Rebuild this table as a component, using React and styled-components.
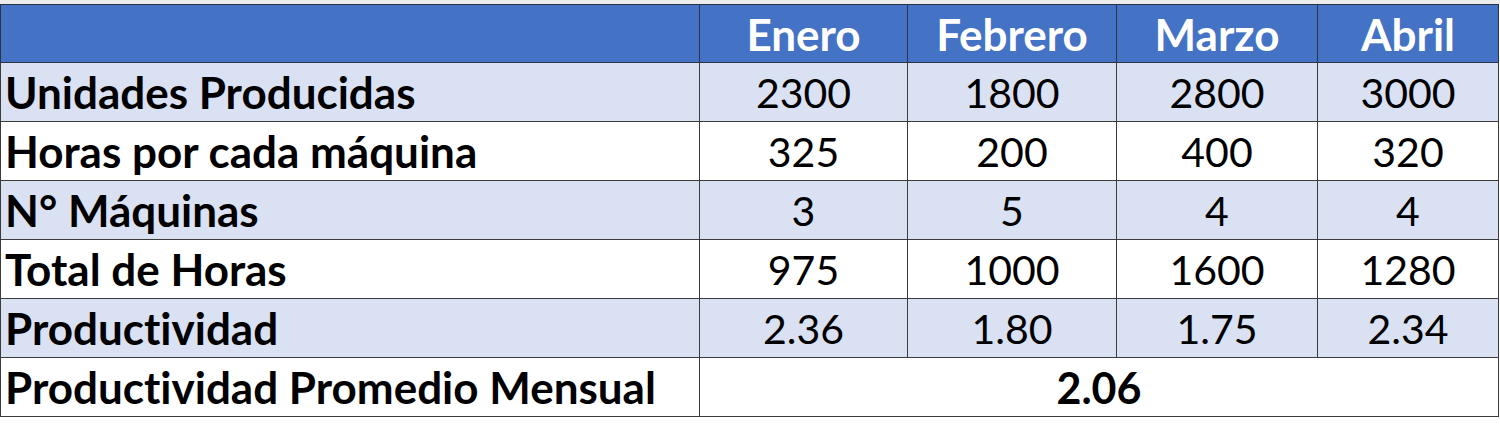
import React from "react";
import styled, { createGlobalStyle } from "styled-components";

const months = ["Enero", "Febrero", "Marzo", "Abril"];

const rows = [
  { label: "Unidades Producidas", values: ["2300", "1800", "2800", "3000"], shaded: true },
  { label: "Horas por cada máquina", values: ["325", "200", "400", "320"] },
  { label: "N° Máquinas", values: ["3", "5", "4", "4"], shaded: true },
  { label: "Total de Horas", values: ["975", "1000", "1600", "1280"] },
  { label: "Productividad", values: ["2.36", "1.80", "1.75", "2.34"], shaded: true },
];

const colWidths = [699, 208, 209, 201, 181];

export default function App() {
  return (
    <>
      <GlobalStyle />
      <Page>
        <Table>
          <colgroup>
            {colWidths.map((w, i) => (
              <col key={i} style={{ width: w }} />
            ))}
          </colgroup>
          <thead>
            <HeadRow>
              <HeadCell />
              {months.map((m) => (
                <HeadCell key={m}>{m}</HeadCell>
              ))}
            </HeadRow>
          </thead>
          <tbody>
            {rows.map((r) => (
              <Row key={r.label} $shaded={r.shaded}>
                <LabelCell>{r.label}</LabelCell>
                {r.values.map((v, i) => (
                  <ValueCell key={i}>{v}</ValueCell>
                ))}
              </Row>
            ))}
            <Row>
              <LabelCell>Productividad Promedio Mensual</LabelCell>
              <ValueCell colSpan={4} $bold>2.06</ValueCell>
            </Row>
          </tbody>
        </Table>
      </Page>
    </>
  );
}

const GlobalStyle = createGlobalStyle`
  html, body {
    margin: 0;
    padding: 0;
    background: #ffffff;
  }
  body {
    font-family: Lato, "Open Sans", "Liberation Sans", sans-serif;
    font-variant-ligatures: none;
  }
`;

const Page = styled.div`
  width: 1500px;
  height: 426px;
  border-top: 4px solid #ececec;
  box-sizing: border-box;
`;

const Table = styled.table`
  width: 1498px;
  border-collapse: collapse;
  table-layout: fixed;
  border: 1.5px solid #3b3b3b;
`;

const HeadRow = styled.tr`
  height: 58px;
  background: #4472c4;
`;

const HeadCell = styled.th`
  border: 1px solid #2a3448;
  color: #ffffff;
  font-size: 44px;
  font-weight: 700;
  text-align: center;
  padding: 0;
  line-height: 1;
`;

const Row = styled.tr`
  height: 59px;
  background: ${(p) => (p.$shaded ? "#d9e1f2" : "#ffffff")};
`;

const LabelCell = styled.td`
  border: 1px solid #3b3b3b;
  color: #000000;
  font-size: 44px;
  font-weight: 700;
  text-align: left;
  padding: 0 0 0 4px;
  line-height: 1;
  white-space: nowrap;
`;

const ValueCell = styled.td`
  border: 1px solid #3b3b3b;
  color: #000000;
  font-size: ${(p) => (p.$bold ? "43px" : "41px")};
  font-weight: ${(p) => (p.$bold ? 700 : 400)};
  text-align: center;
  padding: 0;
  line-height: 1;
`;
